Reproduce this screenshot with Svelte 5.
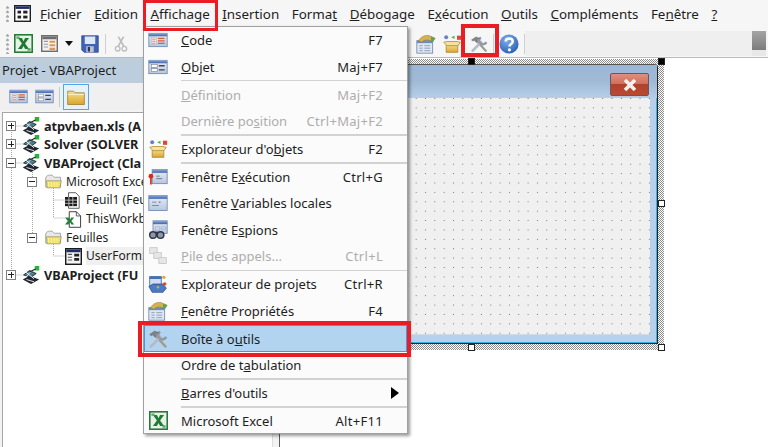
<script>
	const menus = [
		['F', 'ichier'], ['E', 'dition'], ['A', 'ffichage'], ['I', 'nsertion'],
		['Forma', 't', ''], ['D', 'ébogage'], ['E', 'x', 'écution'], ['O', 'utils'],
		['C', 'ompléments'], ['Fe', 'n', 'être'], ['?', '']
	];

	// label is split as [before, underlined, after]
	const items = [
		{ icon: 'code', label: ['', 'C', 'ode'], key: 'F7' },
		{ icon: 'objet', label: ['', 'O', 'bjet'], key: 'Maj+F7' },
		{ sep: true },
		{ label: ['', 'D', 'éfinition'], key: 'Maj+F2', off: true },
		{ label: ['Dernière po', 's', 'ition'], key: 'Ctrl+Maj+F2', off: true },
		{ sep: true },
		{ icon: 'browser', label: ['Explorateur d\'o', 'b', 'jets'], key: 'F2' },
		{ sep: true },
		{ icon: 'exec', label: ['Fenêtre E', 'x', 'écution'], key: 'Ctrl+G' },
		{ icon: 'vars', label: ['Fenêtre ', 'V', 'ariables locales'], key: '' },
		{ icon: 'spy', label: ['Fenêtre E', 's', 'pions'], key: '' },
		{ icon: 'stack', label: ['', 'P', 'ile des appels...'], key: 'Ctrl+L', off: true },
		{ sep: true },
		{ icon: 'project', label: ['Exp', 'l', 'orateur de projets'], key: 'Ctrl+R' },
		{ icon: 'props', label: ['', 'F', 'enêtre Propriétés'], key: 'F4' },
		{ sep: true, hidden: true },
		{ icon: 'tools', label: ['Boîte à o', 'u', 'tils'], key: '', active: true },
		{ label: ['Ordre de t', 'a', 'bulation'], key: '' },
		{ sep: true },
		{ label: ['', 'B', 'arres d\'outils'], key: '', arrow: true },
		{ sep: true },
		{ icon: 'excel', label: ['Microsoft Excel'], key: 'Alt+F11' }
	];

	const tree = [
		{ level: 0, box: '+', icon: 'vba', text: 'atpvbaen.xls (A', bold: true },
		{ level: 0, box: '+', icon: 'vba', text: 'Solver (SOLVER', bold: true },
		{ level: 0, box: '-', icon: 'vba', text: 'VBAProject (Cla', bold: true },
		{ level: 1, box: '-', icon: 'open', text: 'Microsoft Exce' },
		{ level: 2, icon: 'sheet', text: 'Feuil1 (Feu' },
		{ level: 2, icon: 'book', text: 'ThisWorkb' },
		{ level: 1, box: '-', icon: 'open', text: 'Feuilles' },
		{ level: 2, icon: 'uform', text: 'UserForm:', sel: true },
		{ level: 0, box: '+', icon: 'vba', text: 'VBAProject (FU', bold: true }
	];
</script>

{#snippet ic(name, size = 18)}
	<svg class="ic" width={size} height={size} viewBox="0 0 24 24"><use href="#i-{name}" /></svg>
{/snippet}

<svg class="sprite" width="0" height="0">
	<defs>
		<linearGradient id="wintitle" x1="0" y1="0" x2="0" y2="1"><stop offset="0" stop-color="#8faad4" /><stop offset="1" stop-color="#3f64a8" /></linearGradient>
		<linearGradient id="folderg" x1="0" y1="0" x2="0" y2="1"><stop offset="0" stop-color="#f8df90" /><stop offset="1" stop-color="#d9a52c" /></linearGradient>
		<linearGradient id="bluewin" x1="0" y1="0" x2="0" y2="1"><stop offset="0" stop-color="#e8eef8" /><stop offset="1" stop-color="#b7c6de" /></linearGradient>
		<radialGradient id="helpg" cx=".4" cy=".3" r=".8"><stop offset="0" stop-color="#7fb0ea" /><stop offset="1" stop-color="#2358b0" /></radialGradient>
	</defs>
	<symbol id="i-win" viewBox="0 0 24 24">
		<rect x="1" y="4" width="22" height="16" fill="url(#bluewin)" stroke="#6e86ad" />
		<rect x="1" y="4" width="22" height="3.500" fill="url(#wintitle)" />
	</symbol>
	<symbol id="i-code" viewBox="0 0 24 24">
		<use href="#i-win" />
		<rect x="4" y="9" width="6" height="8.500" fill="#f4f4f4" stroke="#c4a0a0" stroke-width=".6" />
		<path d="M12 10h8M12 13h8M12 16h8" stroke="#d9603a" stroke-width="1.700" />
		<path d="M5 11h4M5 13.500h4M5 16h4" stroke="#c07a70" />
	</symbol>
	<symbol id="i-objet" viewBox="0 0 24 24">
		<use href="#i-win" />
		<rect x="4" y="9" width="7" height="3.500" fill="#fff" stroke="#667" stroke-width=".6" />
		<rect x="4" y="14" width="7" height="3.500" fill="#fff" stroke="#667" stroke-width=".6" />
		<path d="M13 10.500h7M13 15.500h7" stroke="#445" stroke-width="1.600" />
	</symbol>
	<symbol id="i-browser" viewBox="0 0 24 24">
		<path d="M5 13h14v9H5z" fill="url(#folderg)" stroke="#9d7a20" stroke-width=".8" />
		<path d="M2 10l4 4h13l3-4-4-1H6z" fill="#f6e39a" stroke="#9d7a20" stroke-width=".8" />
		<circle cx="5" cy="4" r="2.400" fill="#6d7fc4" />
		<rect x="18" y="2" width="5" height="5" fill="#d64a3c" />
		<path d="M11 4l4-2v4z" fill="#56ad4c" />
	</symbol>
	<symbol id="i-exec" viewBox="0 0 24 24">
		<rect x="5" y="3" width="18" height="17" fill="url(#bluewin)" stroke="#6e86ad" />
		<rect x="5" y="3" width="18" height="4" fill="url(#wintitle)" />
		<path d="M10 11h4M10 14h7" stroke="#667" />
		<circle cx="3.500" cy="11" r="2.800" fill="#d8291f" />
		<path d="M3.500 13v8" stroke="#d8291f" stroke-width="2" />
	</symbol>
	<symbol id="i-vars" viewBox="0 0 24 24">
		<rect x="1" y="3" width="22" height="18" fill="url(#bluewin)" stroke="#6e86ad" />
		<rect x="1" y="3" width="22" height="4" fill="url(#wintitle)" />
		<path d="M5 11h5M5 15h8" stroke="#7c8aa2" stroke-width="1.200" />
		<rect x="13" y="10" width="2" height="2" fill="#7c8aa2" />
	</symbol>
	<symbol id="i-spy" viewBox="0 0 24 24">
		<rect x="6" y="1" width="17" height="15" fill="url(#bluewin)" stroke="#6e86ad" />
		<rect x="6" y="1" width="17" height="4" fill="url(#wintitle)" />
		<path d="M9 8h5v5H9zM16 8h5v3h-5z" fill="none" stroke="#99a9c6" stroke-width=".7" />
		<circle cx="6" cy="18" r="4" fill="#8d97a8" stroke="#2f3646" stroke-width="1.800" />
		<circle cx="15" cy="18" r="4" fill="#8d97a8" stroke="#2f3646" stroke-width="1.800" />
		<path d="M9 15h3" stroke="#2f3646" stroke-width="2" />
	</symbol>
	<symbol id="i-stack" viewBox="0 0 24 24">
		<g fill="#e6e6e6" stroke="#c6c6c6">
			<rect x="2" y="2" width="9" height="7" />
			<rect x="7" y="8" width="9" height="7" />
			<rect x="13" y="14" width="9" height="7" />
		</g>
	</symbol>
	<symbol id="i-project" viewBox="0 0 24 24">
		<path d="M2 3h14v11H2z" fill="#cfdcf2" stroke="#44679f" />
		<path d="M2 3h14v3H2z" fill="#4570b5" />
		<path d="M1 15l5-3h12l4 5-4 5H5z" fill="#4a7bc8" stroke="#24406f" stroke-width=".8" />
		<circle cx="19" cy="4" r="2" fill="#e7a23a" />
		<circle cx="20" cy="12" r="2.200" fill="#d8502c" />
		<circle cx="12" cy="16" r="1.500" fill="#e7a23a" />
	</symbol>
	<symbol id="i-props" viewBox="0 0 24 24">
		<rect x="1" y="8" width="19" height="15" fill="#dfe7f3" stroke="#6e86ad" />
		<rect x="1" y="8" width="19" height="3" fill="#6f8dc0" />
		<path d="M4 14h4M10 14h7M4 17h4M10 17h7M4 20h4M10 20h7" stroke="#8092b0" />
		<path d="M3 8c3-5 8-7 13-6l7 3-3 4-6-2c-3 0-5 1-7 3z" fill="#d6b24c" stroke="#8d6f1f" stroke-width=".6" />
		<path d="M18 3l5 2-2 4-3-1z" fill="#5aa558" />
	</symbol>
	<symbol id="i-tools" viewBox="0 0 24 24">
		<path d="M9 8l12 13" stroke="#a39c8e" stroke-width="3" stroke-linecap="round" />
		<path d="M3.500 21L15 9.500" stroke="#b3bcc6" stroke-width="3.400" stroke-linecap="round" />
		<path d="M14.500 3.200A5 5 0 1 0 21.800 9.500" fill="none" stroke="#8f9aa6" stroke-width="3.200" />
		<path d="M2 6.500L8 2.500l5 2-2.500 1-2 4.500-2.500-3-2 1z" fill="#7f8389" stroke="#5e6166" stroke-width=".6" />
	</symbol>
	<symbol id="i-excel" viewBox="0 0 24 24">
		<rect x="1" y="1" width="22" height="22" fill="#e6f2e6" stroke="#257a36" stroke-width="2" />
		<path d="M5 5h5l2 4 2-4h5l-5 7 5 7h-5l-2-4-2 4H5l5-7z" fill="#1f7a35" />
		<path d="M3 3h4v3H3zM17 18h4v3h-4z" fill="#5aa866" />
	</symbol>
	<symbol id="i-app" viewBox="0 0 24 24">
		<rect x="1" y="1" width="22" height="22" fill="#fff" stroke="#222" stroke-width="2" />
		<rect x="2" y="2" width="20" height="3.500" fill="#1c2a6e" />
		<rect x="5" y="8" width="5" height="4" fill="#222" /><rect x="13" y="8" width="6" height="4" fill="#222" />
		<rect x="5" y="15" width="5" height="4" fill="#222" /><rect x="13" y="15" width="6" height="4" fill="#222" />
	</symbol>
	<symbol id="i-form" viewBox="0 0 24 24">
		<rect x="1" y="1" width="22" height="22" fill="#f2f2f2" stroke="#6e6e6e" stroke-width="2" />
		<rect x="2" y="2" width="20" height="4" fill="#6e6e6e" />
		<path d="M4 9h6M4 13h6M4 17h6" stroke="#999" stroke-width="1.500" />
		<path d="M12 8h8v3h-8zM12 13h8v3h-8zM12 18h8v3h-8z" fill="#e8954a" />
	</symbol>
	<symbol id="i-save" viewBox="0 0 24 24">
		<path d="M1 1h22v22H4l-3-3z" fill="#3f63b5" stroke="#2b4487" />
		<rect x="5" y="2" width="14" height="10" fill="#dfe7f6" />
		<rect x="7" y="15" width="10" height="8" fill="#b9c4da" />
		<rect x="9" y="16" width="3" height="6" fill="#334" />
	</symbol>
	<symbol id="i-cut" viewBox="0 0 24 24">
		<path d="M8 1l8 14M16 1L8 15" stroke="#bdbdbd" stroke-width="2.500" />
		<circle cx="7" cy="19" r="3.500" fill="none" stroke="#bdbdbd" stroke-width="2" />
		<circle cx="17" cy="19" r="3.500" fill="none" stroke="#bdbdbd" stroke-width="2" />
	</symbol>
	<symbol id="i-help" viewBox="0 0 24 24">
		<circle cx="12" cy="12" r="11.500" fill="url(#helpg)" />
		<path d="M8 9c0-5 8.500-5 8.500 0 0 3-4 3-4 6" fill="none" stroke="#fff" stroke-width="3" />
		<circle cx="12.500" cy="19" r="1.900" fill="#fff" />
	</symbol>
	<symbol id="i-folder" viewBox="0 0 24 24">
		<path d="M2 5h7l2 2h11v14H2z" fill="url(#folderg)" stroke="#a28230" />
		<path d="M2 9h20" stroke="#fdf3c8" />
	</symbol>
	<symbol id="i-vba" viewBox="0 0 24 24">
		<path d="M1 18l9-5 13 5-11 6z" fill="#23262f" />
		<path d="M2 12l8-6 9 4-7 5z" fill="#4b7e8c" stroke="#111" stroke-width="1" />
		<path d="M5 8l11 9M14 5L5 15" stroke="#e6edf2" stroke-width="1.300" />
		<rect x="17" y="0" width="6" height="6" fill="#27b23a" />
		<path d="M18 4l-8 4" stroke="#222" stroke-width="1.400" />
		<path d="M6 18l10 3" stroke="#dfe6ec" stroke-width="1.300" />
	</symbol>
	<symbol id="i-open" viewBox="0 0 24 24">
		<path d="M1 7c1-3 3-4 6-4h3l3 3h9v14H1z" fill="#e8e8e8" stroke="#8a8a8a" />
		<path d="M2 11h21l-2 10H3z" fill="#f1e268" stroke="#8f8f6a" />
		<path d="M5 13v6M9 13v6M13 13v6M17 13v6" stroke="#fff7bd" />
	</symbol>
	<symbol id="i-sheet" viewBox="0 0 24 24">
		<path d="M5 1h10l5 5v17H5z" fill="#fff" stroke="#222" />
		<path d="M0 7h17v13H0z" fill="#1c1c1c" />
		<path d="M0 11.500h17M0 16h17M5.500 7v13M11 7v13" stroke="#e8e8e8" />
	</symbol>
	<symbol id="i-book" viewBox="0 0 24 24">
		<path d="M6 1h10l6 6v16H6z" fill="#fff" stroke="#222" stroke-width="1.200" />
		<path d="M16 1v6h6" fill="none" stroke="#222" />
		<path d="M0 9h5l2 3 2-3h4l-4 5 4 5H9l-2-3-2 3H0l4-5z" fill="#24803a" />
	</symbol>
	<symbol id="i-uform" viewBox="0 0 24 24">
		<rect x="1" y="1" width="22" height="22" fill="#f4f4f4" stroke="#1a1a1a" stroke-width="2" />
		<rect x="2" y="2" width="20" height="4" fill="#1c2a6e" />
		<path d="M4 9h6M4 13h6M4 17h6" stroke="#555" stroke-width="1.600" />
		<path d="M13 8h7v4h-7zM13 14h7v4h-7z" fill="#222" />
	</symbol>
</svg>

<div class="app">
	<header class="menubar">
		<span class="grip"></span>
		{@render ic('app', 17)}
		<nav class="menus">
			{#each menus as m}
				<span>{#if m.length === 3}{m[0]}<u>{m[1]}</u>{m[2]}{:else}<u>{m[0]}</u>{m[1]}{/if}</span>
			{/each}
		</nav>
	</header>

	<div class="toolbar">
		<span class="grip"></span>
		<span class="tool excel">{@render ic('excel', 19)}</span>
		<span class="tool">{@render ic('form', 17)}</span>
		<span class="drop"></span>
		<span class="tool">{@render ic('save', 18)}</span>
		<span class="tsep"></span>
		<span class="tool cut">{@render ic('cut', 16)}</span>
		<span class="hidden-run"></span>
		<span class="tool">{@render ic('props', 20)}</span>
		<span class="tool browser">{@render ic('browser', 20)}</span>
		<span class="tool">{@render ic('tools', 18)}</span>
		<span class="tsep near"></span>
		<span class="tool help">{@render ic('help', 20)}</span>
		<span class="tsep near"></span>
		<span class="rest"></span>
		<span class="overflow"></span>
	</div>

	<main class="body">
		<aside class="panel">
			<div class="title">Projet - VBAProject</div>
			<div class="ptools">
				{@render ic('code', 19)}
				{@render ic('objet', 19)}
				<span class="psep"></span>
				<span class="folder-btn">{@render ic('folder', 20)}</span>
			</div>
			<div class="tree">
				<svg class="lines" width="140" height="180">
					<path d="M11.500 14v149M32.500 56v70M53.500 76v30M53.500 132v12M32.500 70h6M32.500 126h6M53.500 88h12M53.500 106h12M53.500 144h12M11.500 14h11M11.500 32h11M11.500 51h11M11.500 163h11" fill="none" stroke="#a8a8a8" stroke-dasharray="1 1" />
				</svg>
				{#each tree as row}
					<div class="node l{row.level}" class:bold={row.bold}>
						{#if row.box}<span class="box"><i></i>{#if row.box === '+'}<b></b>{/if}</span>{/if}
						{@render ic(row.icon, row.level === 0 ? 18 : 17)}
						<span class="name" class:sel={row.sel}>{row.text}</span>
					</div>
				{/each}
			</div>
		</aside>

		<section class="canvas">
			<div class="selection">
				<span class="handle black tm"></span>
				<span class="handle black tr"></span>
				<span class="handle mr"></span>
				<span class="handle bm"></span>
				<span class="handle br"></span>
				<div class="form">
					<div class="ftitle">
						<span class="close"><svg width="18" height="14" viewBox="0 0 18 14"><path d="M4 2l10 10M14 2L4 12" stroke="#f4f0ee" stroke-width="3.600" /></svg></span>
					</div>
					<div class="client"></div>
				</div>
			</div>
		</section>
	</main>

	<div class="menu">
		{#each items as it}
			{#if it.sep}
				<div class="sep" class:hid={it.hidden}></div>
			{:else}
				<div class="item" class:off={it.off} class:active={it.active}>
					<span class="mi">{#if it.icon}{@render ic(it.icon, it.icon === 'excel' ? 19 : 20)}{/if}</span>
					<span class="lab">{#if it.label.length === 3}{it.label[0]}<u>{it.label[1]}</u>{it.label[2]}{:else}{it.label[0]}{/if}</span>
					<span class="key">{it.key}</span>
					{#if it.arrow}<span class="arrow"></span>{/if}
				</div>
			{/if}
		{/each}
	</div>

	<span class="red affichage"></span>
	<span class="red toolbtn"></span>
	<span class="red boite"></span>
</div>

<style>
	:global(body) {
		margin: 0;
		background: #fff;
	}

	.sprite {
		position: absolute;
	}

	.app {
		position: relative;
		width: 768px;
		height: 447px;
		overflow: hidden;
		display: flex;
		flex-direction: column;
		background: #fff;
		color: #1e1e1e;
		font-family: 'Noto Sans', 'Open Sans', sans-serif;
		font-size: 13px;
	}

	.ic {
		display: block;
		flex: none;
	}

	.grip {
		width: 3px;
		flex: none;
		background: radial-gradient(circle at 1.500px 1.500px, #a8a8a8 1.200px, transparent 1.500px) 0 0 / 3px 4.500px;
	}

	.menubar {
		height: 27px;
		display: flex;
		align-items: center;
		padding-left: 6px;
		background: #f6f6f7;
		font-size: 13.400px;
	}

	.menubar .grip {
		height: 16px;
		margin-right: 5px;
	}

	.menus {
		display: flex;
		gap: 12.500px;
		margin-left: 9px;
	}

	.toolbar {
		height: 31px;
		display: flex;
		align-items: center;
		box-sizing: border-box;
		padding: 4px 2px 1px 6px;
		background: #f6f6f7;
		border-bottom: 1px solid #b9b9b9;
	}

	.toolbar .grip {
		height: 20px;
		margin-right: 5px;
	}

	.tool {
		display: flex;
		flex: none;
		margin-left: 8px;
	}

	.tool.excel {
		margin-left: 0;
	}

	.drop {
		width: 0;
		height: 0;
		margin-left: 7px;
		border: 4px solid transparent;
		border-top: 5px solid #111;
		border-bottom: 0;
	}

	.tsep {
		width: 1px;
		height: 20px;
		flex: none;
		margin-left: 6px;
		background: #cfcfcf;
	}

	.tsep.near {
		margin-left: 5px;
	}

	.tool.cut {
		margin-left: 7px;
	}

	.hidden-run {
		width: 279px;
		flex: none;
	}

	.tool.browser {
		margin-left: 6px;
	}

	.tool.help {
		margin-left: 5px;
	}

	.rest {
		flex: 1;
		align-self: stretch;
		background: #efefef;
	}

	.overflow {
		width: 14px;
		align-self: stretch;
		background: linear-gradient(#a5a5a5, #7c7c7c 75%, #e8e8e8 76%);
	}

	.body {
		flex: 1;
		display: flex;
		min-height: 0;
	}

	.panel {
		width: 279px;
		flex: none;
		display: flex;
		flex-direction: column;
		background: #f3f3f3;
		border-right: 1px solid #5e5e5e;
	}

	.title {
		height: 25px;
		line-height: 25px;
		padding-left: 2px;
		background: #bccddd;
		font-size: 13px;
	}

	.ptools {
		height: 27px;
		display: flex;
		align-items: center;
		gap: 7px;
		padding-left: 9px;
		background: #f0f0f0;
	}

	.psep {
		width: 1px;
		height: 20px;
		margin-left: -2px;
		background: #c8c8c8;
	}

	.folder-btn {
		margin-left: -4px;
		padding: 2px;
		border: 1px solid #55a6e2;
		background: #e5f1fb;
	}

	.tree {
		position: relative;
		flex: 1;
		margin: 2px 6px 0 2px;
		padding-top: 3.500px;
		background: #fff;
		border: 1px solid #a6a6a6;
		border-width: 1px 1px 0 1px;
		border-right-color: #ddd;
		font-size: 12px;
	}

	.lines {
		position: absolute;
		left: -3px;
		top: -1px;
	}

	.node {
		position: relative;
		height: 18.650px;
		display: flex;
		align-items: center;
		white-space: nowrap;
	}

	.node.bold {
		font-size: 12.700px;
		font-weight: 700;
	}

	.node.l0 { padding-left: 3px; }
	.node.l1 { padding-left: 24px; }
	.node.l2 { padding-left: 62px; }

	.node.l0 :global(.ic) { margin-left: 6px; }
	.node.l1 :global(.ic) { margin-left: 8px; }

	.name {
		margin-left: 4px;
		line-height: 18px;
	}

	.name.sel {
		padding-right: 6px;
		background: #f0f0f0;
	}

	.box {
		position: relative;
		width: 8px;
		height: 8px;
		flex: none;
		border: 1px solid #808080;
		background: #fff;
	}

	.box i {
		position: absolute;
		left: 1px;
		right: 1px;
		top: 3.500px;
		height: 1px;
		background: #222;
	}

	.box b {
		position: absolute;
		top: 1px;
		bottom: 1px;
		left: 3.500px;
		width: 1px;
		background: #222;
	}

	.canvas {
		flex: 1;
		min-width: 0;
		padding: 1px 0 0 60px;
		background: #fff;
	}

	.selection {
		position: relative;
		width: 324px;
		height: 291px;
		box-sizing: border-box;
		padding: 5px 6px 6px 5px;
		background: repeating-conic-gradient(#8c8c8c 0 25%, #fff 0 50%) 0 0 / 2px 2px;
	}

	.handle {
		position: absolute;
		width: 5px;
		height: 5px;
		border: 1px solid #222;
		background: #fff;
		z-index: 1;
	}

	.handle.black { background: #000; }
	.handle.tm { left: 128px; top: -1px; }
	.handle.tr { right: -1px; top: -1px; }
	.handle.mr { right: -1px; top: 141px; }
	.handle.bm { left: 128px; bottom: -1px; }
	.handle.br { right: -1px; bottom: -1px; }

	.form {
		height: 100%;
		box-sizing: border-box;
		display: flex;
		flex-direction: column;
		padding: 0 7px 8px 0;
		background: #b6d1ec;
		border: 1px solid #222;
		border-top-color: #555;
		border-top-right-radius: 4px;
		box-shadow: inset -1px -1px 0 #36b2e0;
	}

	.ftitle {
		height: 33px;
		flex: none;
		margin-right: -7px;
		display: flex;
		justify-content: flex-end;
		padding: 8px 8px 0 0;
		box-sizing: border-box;
		background: linear-gradient(#9bb6d4, #a0bad6 50%, #b6cee8);
	}

	.close {
		width: 39px;
		height: 23px;
		box-sizing: border-box;
		display: flex;
		align-items: center;
		justify-content: center;
		border: 1px solid #6a5560;
		border-radius: 2px;
		background: linear-gradient(#de8f80, #cf6f5c 48%, #b3412a 50%, #b84a33);
	}

	.client {
		flex: 1;
		background-color: #f0f0f0;
		background-image: radial-gradient(circle at .5px .5px, #6f6f6f .7px, transparent .9px);
		background-size: 9.330px 9.400px;
		background-position: 4.400px 0;
		border-bottom: 1px solid #cfdbe8;
	}

	.menu {
		position: absolute;
		left: 143px;
		top: 26px;
		width: 265px;
		height: 408px;
		box-sizing: border-box;
		background: #fbfbfb;
		border: 1px solid #a0a0a0;
		box-shadow: 2px 2px 3px rgba(0, 0, 0, 0.4);
		z-index: 2;
	}

	.item {
		position: relative;
		height: 26.500px;
		display: flex;
		align-items: center;
	}

	.item.off {
		color: #adadad;
	}

	.item.active {
		background: #b2d4f0;
		outline: 1px solid #3f9be0;
		outline-offset: -1px;
	}

	.mi {
		width: 28px;
		margin-right: 9px;
		flex: none;
		display: flex;
		justify-content: center;
	}

	.lab {
		white-space: nowrap;
	}

	.key {
		position: absolute;
		right: 24px;
		white-space: nowrap;
		letter-spacing: 0.3px;
	}

	.arrow {
		position: absolute;
		right: 8px;
		width: 0;
		height: 0;
		border: 6px solid transparent;
		border-left: 8px solid #000;
		border-right: 0;
	}

	.sep {
		height: 1.400px;
		margin-left: 37px;
		background: #d2d2d2;
	}

	.sep.hid {
		background: transparent;
	}

	.red {
		position: absolute;
		box-sizing: border-box;
		border: 4px solid #ec1c24;
		z-index: 3;
	}

	.red.affichage {
		left: 143px;
		top: 0;
		width: 75px;
		height: 31px;
		border-width: 3px;
	}

	.red.toolbtn {
		left: 461px;
		top: 24px;
		width: 38px;
		height: 33px;
	}

	.red.boite {
		left: 138px;
		top: 321px;
		width: 273px;
		height: 36px;
	}
</style>
